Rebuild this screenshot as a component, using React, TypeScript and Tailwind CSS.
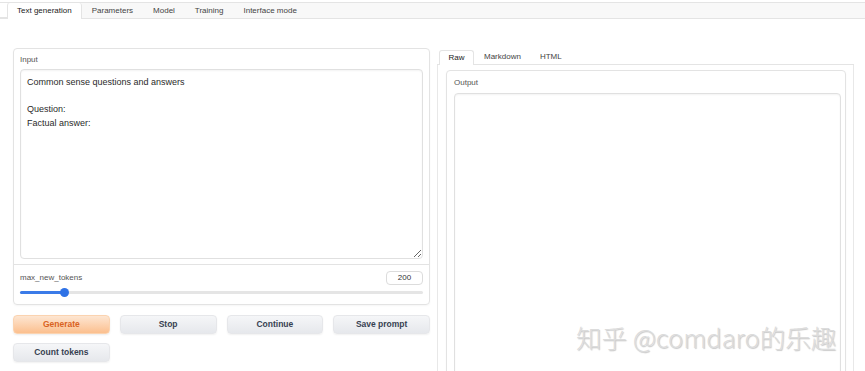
import React from 'react';

const tabs = ['Text generation', 'Parameters', 'Model', 'Training', 'Interface mode'];

function Btn({ label, primary = false }: { label: string; primary?: boolean }) {
  return (
    <button
      className={
        primary
          ? 'h-[19px] rounded-[4px] border border-[#fbd3b0] bg-gradient-to-b from-[#fde6d2] to-[#fbbf8e] text-[8.5px] font-bold text-[#d9621f] shadow-[0_1px_2px_rgba(0,0,0,0.08)]'
          : 'h-[19px] rounded-[4px] border border-[#e6e7ea] bg-gradient-to-b from-[#f5f6f8] to-[#e6e8ec] text-[8.5px] font-bold text-[#374151] shadow-[0_1px_2px_rgba(0,0,0,0.06)]'
      }
    >
      {label}
    </button>
  );
}

export default function App() {
  return (
    <div className="relative h-[371px] w-[865px] overflow-hidden bg-white font-['Liberation_Sans',Arial,sans-serif] text-[#333]">
      {/* top tabs */}
      <div className="mt-[2px] flex h-[17px] border-y border-[#e4e4e4] bg-[#f8f8f8]">
        <div className="w-[7px] border-b border-[#e4e4e4] bg-white" />
        {tabs.map((t, i) => (
          <div
            key={t}
            className={
              i === 0
                ? '-mb-px flex items-center rounded-t-[3px] border-x border-[#e4e4e4] bg-white px-[9px] text-[8px] text-[#222]'
                : 'flex items-center px-[10px] text-[8px] text-[#444]'
            }
          >
            {t}
          </div>
        ))}
      </div>

      <div className="mt-[29px] flex">
        {/* left column */}
        <div className="ml-[13px] w-[417px]">
          <div className="h-[257px] rounded-[4px] border border-[#e3e3e3] shadow-[0_1px_2px_rgba(0,0,0,0.04)]">
            <div className="px-[6px] pt-[6px] pb-[5px]">
              <div className="h-[10px] text-[8px] leading-[10px] text-[#555]">Input</div>
              <textarea
                readOnly
                defaultValue={'Common sense questions and answers\n\nQuestion:\nFactual answer:'}
                className="mt-[4px] block h-[190px] w-full resize-y rounded-[4px] border border-[#e0e0e0] px-[6px] py-[6px] text-[9px] leading-[13.5px] text-[#2a2a2a] shadow-[inset_0_1px_2px_rgba(0,0,0,0.05)] outline-none"
              />
            </div>
            <div className="border-t border-[#e3e3e3] px-[6px] pt-[6px]">
              <div className="flex items-center justify-between">
                <span className="text-[8px] text-[#555]">max_new_tokens</span>
                <div className="flex h-[14px] w-[37px] items-center justify-center rounded-[4px] border border-[#dcdcdc] text-[8px] text-[#333]">
                  200
                </div>
              </div>
              <div className="relative mt-[6px] h-[3px] rounded-full bg-[#e5e5e5]">
                <div className="h-full w-[11%] rounded-full bg-[#3b7be8]" />
                <div className="absolute top-[-3px] left-[calc(11%-4px)] h-[9px] w-[9px] rounded-full bg-[#2f72e6]" />
              </div>
            </div>
          </div>

          <div className="mt-[10px] grid grid-cols-4 gap-x-[10px] gap-y-[9px]">
            <Btn label="Generate" primary />
            <Btn label="Stop" />
            <Btn label="Continue" />
            <Btn label="Save prompt" />
            <Btn label="Count tokens" />
          </div>
        </div>

        {/* right column */}
        <div className="mt-[2px] ml-[7px] flex w-[417px] flex-col">
          <div className="flex h-[15px] border-b border-[#e4e4e4]">
            <div className="w-[2px]" />
            <div className="-mb-px flex w-[35px] items-center justify-center rounded-t-[3px] border-x border-t border-[#e4e4e4] bg-white text-[8px] text-[#222]">
              Raw
            </div>
            <div className="flex items-center px-[10px] text-[8px] text-[#444]">Markdown</div>
            <div className="flex items-center px-[9px] text-[8px] text-[#444]">HTML</div>
          </div>
          <div className="h-[400px] border-x border-[#e8e8e8] pt-[5px] pr-[7px] pl-[8px]">
            <div className="h-[380px] rounded-[4px] border border-[#e3e3e3] pt-[7px] pr-[4px] pl-[7px] shadow-[0_1px_2px_rgba(0,0,0,0.04)]">
              <div className="h-[10px] text-[8px] leading-[10px] text-[#555]">Output</div>
              <div className="mt-[5px] h-[340px] rounded-[4px] border border-[#e0e0e0] shadow-[inset_0_1px_2px_rgba(0,0,0,0.05)]" />
            </div>
          </div>
        </div>
      </div>

      {/* watermark */}
      <div className="pointer-events-none absolute top-[322px] left-[576px] font-['Noto_Sans_CJK_SC',sans-serif] text-[25.5px] leading-[30px] font-light whitespace-nowrap text-[#dcdcdc] [text-shadow:1px_1px_1px_rgba(0,0,0,0.22)]">
        知乎 @comdaro的乐趣
      </div>
    </div>
  );
}
